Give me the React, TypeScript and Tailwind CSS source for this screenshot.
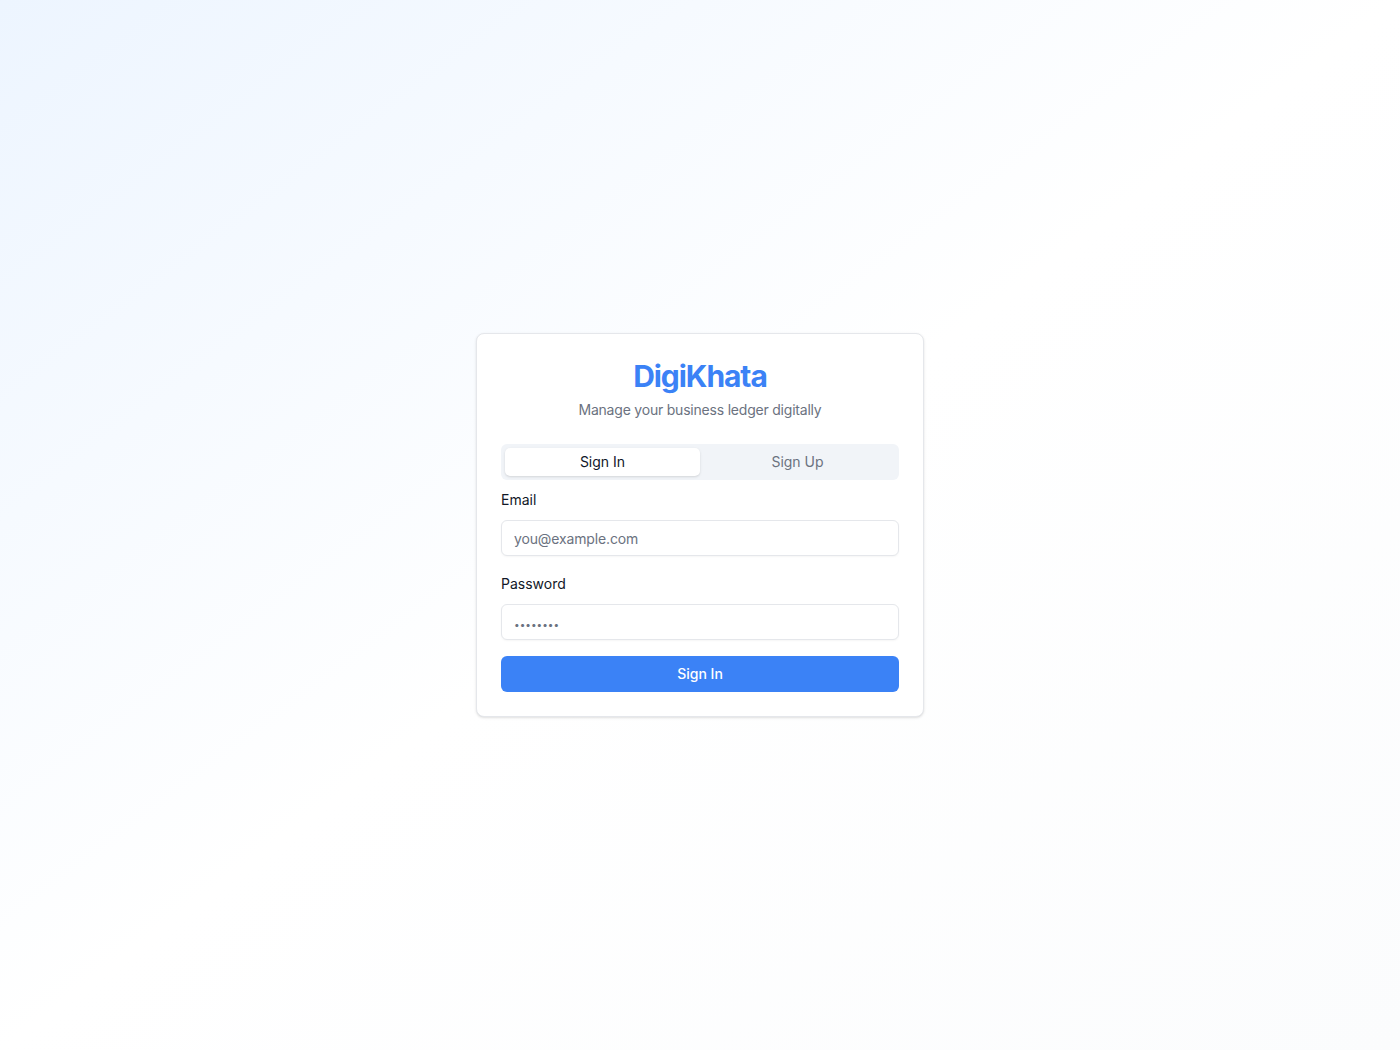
import { useState } from "react";

export default function App() {
  const [tab, setTab] = useState<"signin" | "signup">("signin");

  return (
    <div
      className="min-h-screen flex items-center justify-center bg-gradient-to-br from-[#edf5ff] via-white to-[#fbfcfd] px-4"
      style={{ fontFamily: '"Inter", "Liberation Sans", sans-serif' }}
    >
      <div className="w-full max-w-[448px] rounded-lg border border-[#e5e7eb] bg-white p-6 shadow-sm">
        <div className="flex flex-col items-center">
          <h1 className="text-[30px] leading-9 font-bold text-[#3b82f6] tracking-[-0.035em]">DigiKhata</h1>
          <p className="mt-1.5 text-sm leading-5 text-[#6b7280] tracking-[-0.015em]">Manage your business ledger digitally</p>
        </div>

        <div className="mt-6 grid grid-cols-2 rounded-md bg-[#f1f4f8] p-1 h-9">
          <button
            type="button"
            onClick={() => setTab("signin")}
            className={`rounded-[5px] text-sm ${tab === "signin" ? "bg-white text-[#0f172a] shadow-sm" : "text-[#6b7280]"}`}
          >
            Sign In
          </button>
          <button
            type="button"
            onClick={() => setTab("signup")}
            className={`rounded-[5px] text-sm ${tab === "signup" ? "bg-white text-[#0f172a] shadow-sm" : "text-[#6b7280]"}`}
          >
            Sign Up
          </button>
        </div>

        <form className="mt-2.5" onSubmit={(e) => e.preventDefault()}>
          <label htmlFor="email" className="block text-sm leading-5 text-[#111827]">Email</label>
          <input
            id="email"
            type="email"
            placeholder="you@example.com"
            className="mt-2.5 block w-full h-9 rounded-md border border-[#e5e7eb] bg-white px-3 text-sm tracking-[-0.01em] text-[#111827] placeholder:text-[#6b7280] shadow-[0_1px_2px_rgba(0,0,0,0.04)] outline-none"
          />

          <label htmlFor="password" className="mt-[18px] block text-sm leading-5 text-[#111827]">Password</label>
          <input
            id="password"
            type="password"
            placeholder="••••••••"
            className="mt-2.5 block w-full h-9 rounded-md border border-[#e5e7eb] bg-white px-3 text-sm text-[#111827] placeholder:text-[10px] placeholder:text-[#6b7280] shadow-[0_1px_2px_rgba(0,0,0,0.04)] outline-none"
          />

          <button
            type="submit"
            className="mt-4 w-full h-9 rounded-md bg-[#3b82f6] text-sm font-medium text-white"
          >
            {tab === "signin" ? "Sign In" : "Sign Up"}
          </button>
        </form>
      </div>
    </div>
  );
}
